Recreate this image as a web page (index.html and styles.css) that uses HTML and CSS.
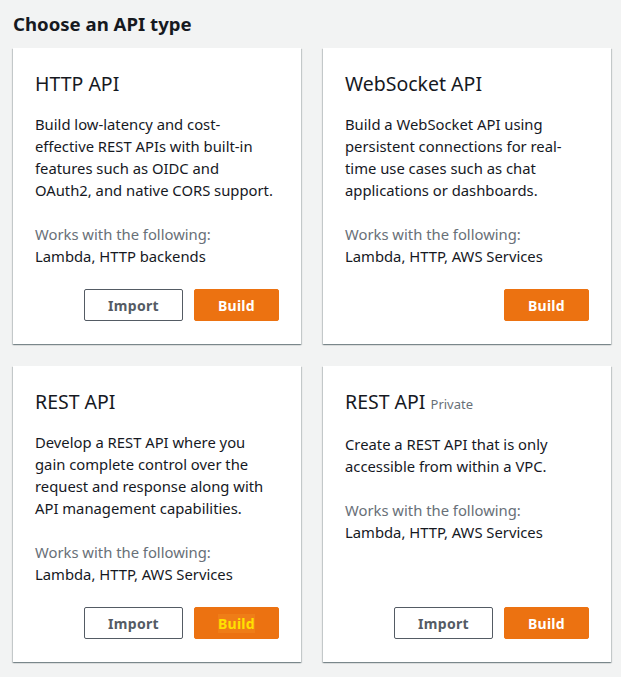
FILE: index.html
```html
<!DOCTYPE html>
<html lang="en">
<head>
<meta charset="utf-8">
<title>Choose an API type</title>
<link rel="stylesheet" href="styles.css">
</head>
<body>
<main class="page">
  <h2 class="page-title">Choose an API type</h2>
  <div class="grid">
    <section class="card">
      <h3 class="card-title">HTTP API</h3>
      <p class="card-desc">Build low-latency and cost-effective REST APIs with built-in features such as OIDC and OAuth2, and native CORS support.</p>
      <p class="card-works"><span class="muted">Works with the following:</span><br>Lambda, HTTP backends</p>
      <div class="actions">
        <button class="btn btn-normal">Import</button>
        <button class="btn btn-primary">Build</button>
      </div>
    </section>
    <section class="card">
      <h3 class="card-title">WebSocket API</h3>
      <p class="card-desc">Build a WebSocket API using persistent connections for real-time use cases such as chat applications or dashboards.</p>
      <p class="card-works"><span class="muted">Works with the following:</span><br>Lambda, HTTP, AWS Services</p>
      <div class="actions">
        <button class="btn btn-primary">Build</button>
      </div>
    </section>
    <section class="card">
      <h3 class="card-title">REST API</h3>
      <p class="card-desc">Develop a REST API where you gain complete control over the request and response along with API management capabilities.</p>
      <p class="card-works"><span class="muted">Works with the following:</span><br>Lambda, HTTP, AWS Services</p>
      <div class="actions">
        <button class="btn btn-normal">Import</button>
        <button class="btn btn-primary"><span class="hl">Build</span></button>
      </div>
    </section>
    <section class="card">
      <h3 class="card-title">REST API <small class="tag">Private</small></h3>
      <p class="card-desc">Create a REST API that is only accessible from within a VPC.</p>
      <p class="card-works"><span class="muted">Works with the following:</span><br>Lambda, HTTP, AWS Services</p>
      <div class="actions">
        <button class="btn btn-normal">Import</button>
        <button class="btn btn-primary">Build</button>
      </div>
    </section>
  </div>
</main>
</body>
</html>
```

FILE: styles.css
```css
html, body {
  margin: 0;
  padding: 0;
  background: #f2f3f3;
}
body {
  font-family: "Noto Sans", "Open Sans", sans-serif;
  color: #16191f;
  font-size: 14.8px;
  line-height: 22px;
}
.page {
  padding: 12px 10px 12px 13px;
}
.page-title {
  margin: 0 0 12px;
  font-size: 18.6px;
  line-height: 24px;
  font-weight: 700;
  color: #16191f;
}
.grid {
  display: grid;
  grid-template-columns: 288px 288px;
  column-gap: 22px;
  row-gap: 22px;
}
.card {
  background: #fff;
  box-shadow: 0 1px 1px 0 rgba(0, 28, 36, 0.3), 1px 1px 1px 0 rgba(0, 28, 36, 0.15), -1px 1px 1px 0 rgba(0, 28, 36, 0.15);
  padding: 22px 22px 23px;
  display: flex;
  flex-direction: column;
}
.card-title {
  margin: 0 0 15px;
  font-size: 19.5px;
  line-height: 28px;
  font-weight: 400;
  color: #16191f;
}
.tag {
  font-size: 13px;
  color: #687078;
  font-weight: 400;
}
.card-desc {
  margin: 0 0 22px;
}
.card-works {
  margin: 0 0 22px;
}
.muted {
  color: #687078;
}
.actions {
  margin-top: auto;
  display: flex;
  justify-content: flex-end;
  gap: 11px;
}
.btn {
  font-family: inherit;
  font-size: 14px;
  font-weight: 700;
  height: 32px;
  padding: 0 23px;
  border-radius: 2px;
  cursor: pointer;
  letter-spacing: 0.3px;
}
.btn-normal {
  background: #fff;
  border: 1px solid #545b64;
  color: #545b64;
}
.btn-primary {
  background: #ec7211;
  border: 1px solid #ec7211;
  color: #fff;
}
.hl {
  color: #ffe000;
  background: #ef7d17;
}
```
